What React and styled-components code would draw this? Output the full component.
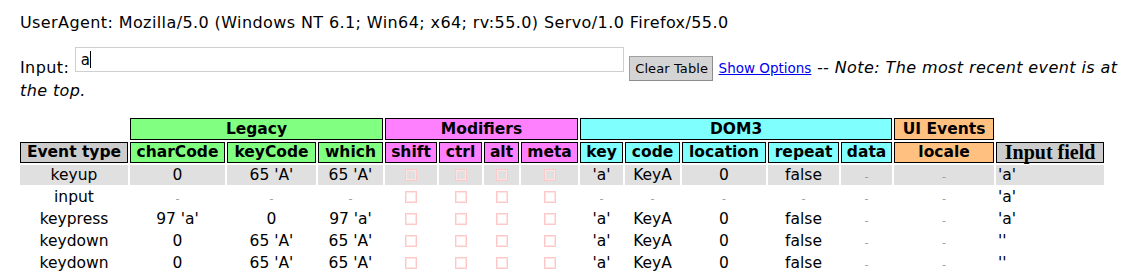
import React from "react";
import styled, { createGlobalStyle } from "styled-components";

const GlobalStyle = createGlobalStyle`
  body {
    margin: 0;
    background: #fff;
    color: #000;
    font-family: "DejaVu Sans", Verdana, sans-serif;
    font-size: 16px;
  }
`;

const groups = [
  { label: "Legacy", span: 3, color: "#80ff80" },
  { label: "Modifiers", span: 4, color: "#ff80ff" },
  { label: "DOM3", span: 5, color: "#80ffff" },
  { label: "UI Events", span: 1, color: "#ffc080" },
];

const columns = [
  { label: "Event type", width: 108, color: "#cccccc" },
  { label: "charCode", width: 95, color: "#80ff80" },
  { label: "keyCode", width: 89, color: "#80ff80" },
  { label: "which", width: 65, color: "#80ff80" },
  { label: "shift", width: 52, color: "#ff80ff" },
  { label: "ctrl", width: 43, color: "#ff80ff" },
  { label: "alt", width: 35, color: "#ff80ff" },
  { label: "meta", width: 57, color: "#ff80ff" },
  { label: "key", width: 43, color: "#80ffff" },
  { label: "code", width: 55, color: "#80ffff" },
  { label: "location", width: 84, color: "#80ffff" },
  { label: "repeat", width: 71, color: "#80ffff" },
  { label: "data", width: 51, color: "#80ffff" },
  { label: "locale", width: 100, color: "#ffc080" },
  { label: "Input field", width: 108, color: "#cccccc", serif: true },
];

const CB = "cb";
const rows = [
  { type: "keyup", current: true, cells: ["0", "65 'A'", "65 'A'", CB, CB, CB, CB, "'a'", "KeyA", "0", "false", null, null], input: "'a'" },
  { type: "input", cells: [null, null, null, CB, CB, CB, CB, null, null, null, null, null, null], input: "'a'" },
  { type: "keypress", cells: ["97 'a'", "0", "97 'a'", CB, CB, CB, CB, "'a'", "KeyA", "0", "false", null, null], input: "'a'" },
  { type: "keydown", cells: ["0", "65 'A'", "65 'A'", CB, CB, CB, CB, "'a'", "KeyA", "0", "false", null, null], input: "''" },
  { type: "keydown", cells: ["0", "65 'A'", "65 'A'", CB, CB, CB, CB, "'a'", "KeyA", "0", "false", null, null], input: "''" },
];

function App() {
  return (
    <Page>
      <GlobalStyle />
      <Agent>
        UserAgent: Mozilla/5.0 (Windows NT 6.1; Win64; x64; rv:55.0) Servo/1.0
        Firefox/55.0
      </Agent>
      <Controls>
        Input: <InputWrap>
          <TextInput type="text" value="a" readOnly />
          <Caret />
        </InputWrap>{" "}
        <ClearButton>Clear Table</ClearButton>{" "}
        <OptionsLink href="#">Show Options</OptionsLink>{" "}
        <Note>-- Note: The most recent event is at the top.</Note>
      </Controls>
      <EventTable>
        <colgroup>
          {columns.map((c, i) => (
            <col key={i} style={{ width: c.width }} />
          ))}
        </colgroup>
        <thead>
          <tr>
            <GroupCell $empty />
            {groups.map((g) => (
              <GroupCell key={g.label} colSpan={g.span} $bg={g.color}>
                {g.label}
              </GroupCell>
            ))}
            <GroupCell $empty />
          </tr>
          <tr>
            {columns.map((c) => (
              <HeadCell key={c.label} $bg={c.color} $serif={c.serif}>
                {c.label}
              </HeadCell>
            ))}
          </tr>
        </thead>
        <tbody>
          {rows.map((r, i) => (
            <tr key={i}>
              <DataCell $current={r.current}>{r.type}</DataCell>
              {r.cells.map((v, j) => (
                <DataCell key={j} $current={r.current}>
                  {v === CB ? <Check /> : v === null ? <Dash>-</Dash> : v}
                </DataCell>
              ))}
              <DataCell $current={r.current} $left>
                {r.input}
              </DataCell>
            </tr>
          ))}
        </tbody>
      </EventTable>
    </Page>
  );
}

export default App;

const Page = styled.div`
  padding: 0 0 0 20px;
`;

const Agent = styled.div`
  padding-top: 13px;
  line-height: 19px;
  letter-spacing: 0.4px;
`;

const Controls = styled.p`
  margin: 15px 0 0;
  line-height: 20px;
  letter-spacing: 0.4px;
`;

const InputWrap = styled.span`
  position: relative;
  display: inline-block;
  overflow: hidden;
  vertical-align: 1px;
`;

const TextInput = styled.input`
  display: block;
  box-sizing: border-box;
  width: 549px;
  height: 25px;
  margin: 0;
  padding: 0 5px;
  border: 1px solid #cfcfcf;
  background: #fff;
  font-family: "DejaVu Sans", Verdana, sans-serif;
  font-size: 15px;
  color: #000;
  outline: none;
`;

const Caret = styled.span`
  position: absolute;
  left: 15px;
  top: 4px;
  width: 1px;
  height: 17px;
  background: #000;
`;

const ClearButton = styled.button`
  box-sizing: border-box;
  height: 25px;
  margin: 0;
  padding: 0 4px 0 5px;
  border: 1px solid #a0a0a0;
  border-right-color: #8c8c8c;
  border-bottom-color: #8c8c8c;
  background: #d4d4d4;
  font-family: "DejaVu Sans", Verdana, sans-serif;
  font-size: 13px;
  line-height: 23px;
  letter-spacing: 0.1px;
  color: #000;
`;

const OptionsLink = styled.a`
  font-size: 13.5px;
  letter-spacing: 0;
  color: #0000ee;
  text-decoration: underline;
`;

const Note = styled.i`
  font-style: italic;
`;

const EventTable = styled.table`
  margin-top: 15px;
  margin-left: -2px;
  table-layout: fixed;
  border-collapse: separate;
  border-spacing: 2px;
  width: 1088px;
  font-size: 15.5px;
`;

const GroupCell = styled.th`
  padding: 0;
  line-height: 20px;
  font-weight: bold;
  text-align: center;
  border: ${(p) => (p.$empty ? "none" : "1px solid #000")};
  background: ${(p) => (p.$empty ? "transparent" : p.$bg)};
`;

const HeadCell = styled.th`
  padding: 0;
  height: 19px;
  line-height: 19px;
  text-align: center;
  white-space: nowrap;
  border: 1px solid #000;
  background: ${(p) => p.$bg};
  font-weight: bold;
  font-family: ${(p) =>
    p.$serif ? '"Liberation Serif", "Times New Roman", serif' : "inherit"};
  font-size: ${(p) => (p.$serif ? "20px" : "15.5px")};
`;

const DataCell = styled.td`
  padding: 0 0 0 ${(p) => (p.$left ? "2px" : "0")};
  height: 20px;
  line-height: 20px;
  white-space: nowrap;
  text-align: ${(p) => (p.$left ? "left" : "center")};
  background: ${(p) => (p.$current ? "#e0e0e0" : "transparent")};
`;

const Dash = styled.span`
  color: #999;
  font-size: 11px;
  line-height: 10px;
`;

const Check = styled.span`
  display: inline-block;
  box-sizing: border-box;
  width: 12px;
  height: 12px;
  vertical-align: -1px;
  border: 1px solid #ffc8c8;
  box-shadow: inset 0 0 0 1px #ffe4e4;
`;
